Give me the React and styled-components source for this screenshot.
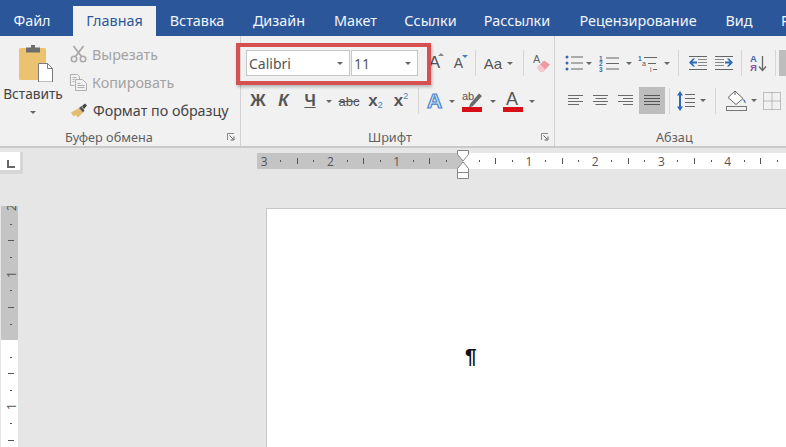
import React from 'react'
import styled, { createGlobalStyle } from 'styled-components'

const UI_FONT = `'Noto Sans', 'Open Sans', 'Liberation Sans', sans-serif`
const TICK = 16.55

const GlobalStyle = createGlobalStyle`
  html, body {
    margin: 0;
    width: 786px;
    height: 447px;
    overflow: hidden;
    background: #e6e6e6;
  }
  body {
    font-family: ${UI_FONT};
  }
`

const Page = styled.div`
  display: flex;
  flex-direction: column;
  width: 786px;
  height: 447px;
  overflow: hidden;
`

const TabBar = styled.div`
  display: flex;
  align-items: flex-end;
  flex: 0 0 36px;
  background: #2b579a;
  white-space: nowrap;
`

const Tab = styled.div`
  flex: 0 0 ${(p) => p.$w}px;
  height: 30px;
  line-height: 29px;
  margin-right: ${(p) => p.$gap || 0}px;
  padding-left: ${(p) => p.$pad || 0}px;
  text-align: ${(p) => (p.$pad ? 'left' : 'center')};
  font-size: 14.4px;
  color: ${(p) => (p.$active ? '#2b579a' : '#f2f5fa')};
  background: ${(p) => (p.$active ? '#f1f1f1' : 'transparent')};
`

const Ribbon = styled.div`
  display: flex;
  flex: 0 0 112px;
  box-sizing: border-box;
  background: #f1f1f1;
  border-bottom: 2px solid #c9c9c9;
`

const Group = styled.div`
  position: relative;
  display: flex;
  flex-direction: column;
  flex: 0 0 ${(p) => p.$w}px;
  box-sizing: border-box;
  border-right: ${(p) => (p.$last ? 'none' : '1px solid #d2d2d2')};
`

const GroupBody = styled.div`
  flex: 1;
  display: flex;
  flex-direction: column;
  padding-left: ${(p) => p.$left}px;
`

const GroupLabel = styled.div`
  display: flex;
  align-items: center;
  height: 22px;
  box-sizing: border-box;
  padding: 4px 5px 0 ${(p) => p.$left}px;
  font-size: 12.7px;
  color: #5f5f5f;
`

const Launcher = styled.svg`
  margin-left: auto;
`

const ClipBody = styled.div`
  flex: 1;
  display: flex;
  padding-top: 8px;
`

const PasteColumn = styled.div`
  flex: 0 0 66px;
  display: flex;
  flex-direction: column;
  align-items: center;
  font-size: 13.7px;
  color: #444;
  line-height: 18px;
`

const PasteGlyph = styled.svg`
  margin-left: 6px;
`

const PasteLabel = styled.span`
  margin-top: 3px;
`

const ClipList = styled.div`
  display: flex;
  flex-direction: column;
  gap: 8px;
  padding-left: 4px;
`

const ClipItem = styled.div`
  display: flex;
  align-items: center;
  gap: 5px;
  height: 20px;
  font-size: 14.3px;
  white-space: nowrap;
  color: ${(p) => (p.$disabled ? '#a3a3a3' : '#444')};
`

const ClipIcon = styled.span`
  flex: 0 0 17px;
  display: flex;
  justify-content: center;
`

const Row = styled.div`
  display: flex;
  align-items: center;
  height: ${(p) => p.$h}px;
  margin-top: ${(p) => p.$top || 0}px;
`

const Combo = styled.div`
  display: flex;
  align-items: center;
  justify-content: space-between;
  box-sizing: border-box;
  width: ${(p) => p.$w}px;
  height: 26px;
  padding: 0 6px 0 2px;
  background: #fff;
  border: 1px solid #c6c6c6;
  margin-right: ${(p) => p.$gap || 0}px;
  font-size: 14px;
  color: #555;
`

const Cell = styled.div`
  position: relative;
  flex: 0 0 ${(p) => p.$w}px;
  height: ${(p) => p.$h || 26}px;
  display: flex;
  align-items: center;
  justify-content: center;
  font-family: 'Liberation Sans', sans-serif;
  font-size: ${(p) => p.$size || 16}px;
  font-weight: ${(p) => (p.$bold ? 700 : 400)};
  font-style: ${(p) => (p.$italic ? 'italic' : 'normal')};
  color: ${(p) => p.$color || '#555'};
  background: ${(p) => (p.$on ? '#bdbdbd' : 'transparent')};
  text-decoration: ${(p) => p.$deco || 'none'};
`

const Caret = styled.i`
  display: block;
  width: 0;
  height: 0;
  flex: none;
  margin-top: ${(p) => p.$top || 0}px;
  border-left: 3px solid transparent;
  border-right: 3px solid transparent;
  border-top: 3px solid #666;
`

const GrowMark = styled.i`
  position: absolute;
  top: ${(p) => (p.$up ? 3 : 5)}px;
  right: ${(p) => (p.$up ? 2 : 3)}px;
  width: 0;
  height: 0;
  border-left: 3px solid transparent;
  border-right: 3px solid transparent;
  border-top: ${(p) => (p.$up ? 'none' : '3px solid #4a7ebb')};
  border-bottom: ${(p) => (p.$up ? '3px solid #888' : 'none')};
`

const Sep = styled.i`
  display: block;
  width: 1px;
  height: 26px;
  background: #d6d6d6;
`

const Index = styled.span`
  position: relative;
  top: ${(p) => (p.$up ? -5 : 4)}px;
  font-size: 9px;
  font-weight: 400;
  color: #4a7ebb;
`

const Highlight = styled.div`
  position: absolute;
  left: -5px;
  top: 7px;
  width: 195px;
  height: 42px;
  box-sizing: border-box;
  border: 4px solid #d5504f;
  box-shadow: 1px 2px 3px rgba(0, 0, 0, 0.25);
  pointer-events: none;
`

const Workspace = styled.div`
  flex: 1;
  display: flex;
  flex-direction: column;
  min-height: 0;
  background: #e6e6e6;
`

const RulerRow = styled.div`
  position: relative;
  display: flex;
  align-items: flex-start;
  flex: 0 0 58px;
`

const TabStop = styled.div`
  flex: 0 0 20px;
  height: 18px;
  margin-top: 4px;
  background: #fff;
  border-bottom: 4px solid #d6d6d6;
  border-right: 3px solid #d6d6d6;
  display: flex;
  align-items: flex-end;
`

const TabGlyph = styled.i`
  display: block;
  width: 6px;
  height: 6px;
  margin: 0 0 2px 7px;
  border-left: 2px solid #666;
  border-bottom: 2px solid #666;
`

const HRuler = styled.div`
  flex: 1;
  display: flex;
  height: 16px;
  margin: 5px 0 0 234px;
  overflow: hidden;
  background: linear-gradient(90deg, #c4c4c4 206px, #fff 206px);
`

const HTrack = styled.div`
  display: flex;
  margin-left: -1px;
`

const HTick = styled.div`
  flex: 0 0 ${TICK}px;
  display: flex;
  align-items: center;
  justify-content: center;
  font-family: 'Open Sans', sans-serif;
  font-size: 12px;
  color: #555;
`

const TickMark = styled.i`
  display: block;
  width: ${(p) => (p.$vertical ? (p.$long ? 6 : 2) : 1)}px;
  height: ${(p) => (p.$vertical ? 1 : p.$long ? 6 : 2)}px;
  background: #555;
`

const Marker = styled.svg`
  position: absolute;
  left: 457px;
  top: 1px;
`

const DocRow = styled.div`
  flex: 1;
  display: flex;
  min-height: 0;
  padding-left: 1px;
`

const VRuler = styled.div`
  flex: 0 0 17px;
  display: flex;
  flex-direction: column;
  overflow: hidden;
  background: linear-gradient(180deg, #c4c4c4 134px, #fff 134px);
`

const VTrack = styled.div`
  display: flex;
  flex-direction: column;
  margin-top: -7px;
`

const VTick = styled.div`
  flex: 0 0 ${TICK}px;
  display: flex;
  align-items: center;
  justify-content: center;
  padding-left: 3px;
  font-family: 'Open Sans', sans-serif;
  font-size: 12px;
  color: #555;
`

const VNumber = styled.span`
  display: block;
  transform: rotate(-90deg);
`

const Sheet = styled.div`
  flex: 1;
  margin: 2px 0 0 248px;
  background: #fff;
  border-left: 1px solid #c6c6c6;
  border-top: 1px solid #c6c6c6;
  padding: 134px 0 0 198px;
  font-family: 'Liberation Sans', sans-serif;
  font-size: 21px;
  line-height: 26px;
  color: #111;
`

const Pilcrow = styled.span`
  font-weight: 700;
`

const LauncherIcon = () => (
  <Launcher width="8" height="8" viewBox="0 0 8 8">
    <path d="M.5 7V.5H7" fill="none" stroke="#8a8a8a" />
    <path d="M2.500 2.500 6.500 6.500M7 3.500V7H3.500" fill="none" stroke="#666" />
  </Launcher>
)

const PasteIcon = () => (
  <PasteGlyph width="36" height="38" viewBox="0 0 36 38">
    <rect x="1" y="4" width="27" height="32" rx="1.5" fill="#ebc270" />
    <path d="M8 6V3.500h5V1h4v2.500h5V6v2.500H8z" fill="#6d6d6d" />
    <path d="M20.500 19.500h9l5 5v13.500h-14z" fill="#fff" stroke="#7a7a7a" />
    <path d="M29.500 19.500v5h5" fill="none" stroke="#7a7a7a" />
  </PasteGlyph>
)

const ScissorsIcon = () => (
  <svg width="17" height="18" viewBox="0 0 17 18">
    <circle cx="4" cy="14" r="2.700" fill="none" stroke="#aaa" strokeWidth="1.600" />
    <circle cx="13" cy="14" r="2.700" fill="none" stroke="#aaa" strokeWidth="1.600" />
    <path d="M5.500 11.500 13.500 1M11.500 11.500 3.500 1" stroke="#aaa" strokeWidth="1.800" fill="none" />
  </svg>
)

const CopyIcon = () => (
  <svg width="17" height="17" viewBox="0 0 17 17" fill="none" stroke="#b0b0b0">
    <path d="M.5.500h7l2 2v3M.5.500v11h4" />
    <path d="M5.500 5.500h7l4 4v7h-11zM7.500 9.500h3M7.500 11.500h7M7.500 13.500h7" />
    <path d="M2.500 3.500h4M2.500 5.500h2M2.500 7.500h2" />
  </svg>
)

const BrushIcon = () => (
  <svg width="18" height="15" viewBox="0 0 18 15">
    <path d="M1 9.500 9 5l4 4.500L8 14.500 5.500 12 3.500 13.500z" fill="#e3bd72" />
    <path d="M9 5l4 4.500 1.500-2L11.500 3z" fill="#555" />
    <path d="M12 3l3-2.500 2 2L14 6z" fill="#444" />
  </svg>
)

const EraserIcon = () => (
  <svg width="18" height="20" viewBox="0 0 18 20">
    <text x="0" y="10" fontFamily="Liberation Sans" fontSize="11" fill="#666">A</text>
    <path d="M4 14.500 11 7.500 17 11.500 10.500 18.500H7z" fill="#ee9aa2" />
    <path d="M4 14.500 7 18.500H10.500L12 16.500 7.500 11.500z" fill="#f6c9cd" />
  </svg>
)

const TextEffectIcon = () => (
  <svg width="20" height="22" viewBox="0 0 20 22">
    <text x="1" y="18" fontFamily="Liberation Sans" fontWeight="700" fontSize="21" fill="#dbe8f7" stroke="#4a86cf" strokeWidth="1.200">A</text>
  </svg>
)

const HighlightIcon = () => (
  <svg width="21" height="22" viewBox="0 0 21 22">
    <text x="0" y="10" fontFamily="Liberation Sans" fontSize="11" fill="#555">ab</text>
    <path d="M8 14 17 3.500l3 2.500-9 10-4 1.500z" fill="#6b6b6b" />
    <rect x="0" y="17" width="20" height="5" fill="#d80f16" />
  </svg>
)

const FontColorIcon = () => (
  <svg width="21" height="22" viewBox="0 0 21 22">
    <text x="3" y="15" fontFamily="Liberation Sans" fontSize="18" fill="#555">A</text>
    <rect x="0" y="17" width="20" height="5" fill="#d80f16" />
  </svg>
)

const Lines = ({ rows, w = 16, color = '#6b6b6b' }) => (
  <svg width={w} height="16" viewBox={`0 0 ${w} 16`}>
    {rows.map(([x1, x2, y]) => (
      <rect key={y} x={x1} y={y} width={x2 - x1} height="1" fill={color} />
    ))}
  </svg>
)

const rowsFor = (kind) => {
  const short = { left: [0, 11], center: [2.5, 13.5], right: [5, 15] }
  return [2, 5, 8, 11].map((y, i) => {
    if (kind === 'justify') return [0, 16, y]
    return i % 2 === 0 ? [0, 15, y] : [...short[kind], y]
  })
}

const BulletsIcon = () => (
  <svg width="18" height="16" viewBox="0 0 18 16">
    {[2, 8, 14].map((y) => (
      <g key={y}>
        <circle cx="2" cy={y} r="1.500" fill="#3e6ba8" />
        <rect x="6" y={y - 0.5} width="12" height="1" fill="#666" />
      </g>
    ))}
  </svg>
)

const NumbersIcon = () => (
  <svg width="20" height="17" viewBox="0 0 20 17">
    {[1, 2, 3].map((n) => (
      <g key={n}>
        <text x="0" y={n * 5.5} fontFamily="Liberation Sans" fontSize="6.500" fontWeight="700" fill="#3e6ba8">{n}</text>
        <rect x="7" y={n * 5.5 - 3} width="13" height="1" fill="#666" />
      </g>
    ))}
  </svg>
)

const MultilevelIcon = () => (
  <svg width="20" height="17" viewBox="0 0 20 17" fontFamily="Liberation Sans">
    <text x="0" y="6" fontSize="6.500" fontWeight="700" fill="#3e6ba8">1</text>
    <rect x="6" y="2" width="13" height="1" fill="#666" />
    <text x="4" y="11" fontSize="7" fill="#555">a</text>
    <rect x="10" y="8" width="8" height="1" fill="#666" />
    <text x="12" y="16.500" fontSize="6.500" fill="#555">i</text>
    <rect x="15" y="14" width="4" height="1" fill="#666" />
  </svg>
)

const IndentIcon = ({ flip }) => (
  <svg width="18" height="16" viewBox="0 0 18 16">
    <g transform={flip ? 'translate(18 0) scale(-1 1)' : undefined}>
      <rect x="0" y="1" width="18" height="1" fill="#666" />
      <rect x="0" y="14" width="18" height="1" fill="#666" />
      <rect x="9" y="4" width="9" height="1" fill="#888" />
      <rect x="9" y="7" width="9" height="1" fill="#888" />
      <rect x="9" y="10" width="9" height="1" fill="#888" />
      <path d="M0 7.500 4 3.500H6L3.500 6.500H8V8.500H3.500L6 11.500H4z" fill="#2f69b4" />
    </g>
  </svg>
)

const SortIcon = () => (
  <svg width="18" height="20" viewBox="0 0 18 20" fontFamily="Liberation Sans" fontWeight="700" fontSize="9.500">
    <text x="0" y="9" fill="#3e6ba8">A</text>
    <text x="0" y="18" fill="#8a4d9e">Я</text>
    <path d="M12.500 3v14M9 13.500l3.500 4 3.500-4" fill="none" stroke="#666" strokeWidth="1.300" />
  </svg>
)

const SpacingIcon = () => (
  <svg width="18" height="20" viewBox="0 0 18 20">
    <path d="M3 0 6 4.500H4V15.500H6L3 20 0 15.500H2V4.500H0z" fill="#2f69b4" />
    {[3, 7, 11, 15].map((y) => (
      <rect key={y} x="8" y={y} width="10" height="1" fill="#666" />
    ))}
  </svg>
)

const ShadingIcon = () => (
  <svg width="21" height="21" viewBox="0 0 21 21">
    <path d="M9 1 17 8.500 10 14.500 2 7.500z" fill="#fff" stroke="#666" />
    <path d="M9 1v4" stroke="#666" />
    <path d="M17 8.500c2 1.500 3 3 2.500 5-1-1-2-2-2.500-5z" fill="#3b73b9" />
    <rect x=".5" y="16.500" width="20" height="4" fill="none" stroke="#777" />
  </svg>
)

const BordersIcon = () => (
  <svg width="18" height="18" viewBox="0 0 18 18" fill="none" stroke="#888" strokeDasharray="1 1">
    <rect x=".5" y=".5" width="17" height="17" />
    <path d="M9 .5v17M.5 9h17" />
  </svg>
)

const ClipboardGroup = () => (
  <Group $w={241}>
    <ClipBody>
      <PasteColumn>
        <PasteIcon />
        <PasteLabel>Вставить</PasteLabel>
        <Caret $top={8} />
      </PasteColumn>
      <ClipList>
        <ClipItem $disabled>
          <ClipIcon><ScissorsIcon /></ClipIcon>
          Вырезать
        </ClipItem>
        <ClipItem $disabled>
          <ClipIcon><CopyIcon /></ClipIcon>
          Копировать
        </ClipItem>
        <ClipItem>
          <ClipIcon><BrushIcon /></ClipIcon>
          Формат по образцу
        </ClipItem>
      </ClipList>
    </ClipBody>
    <GroupLabel $left={65}>
      Буфер обмена
      <LauncherIcon />
    </GroupLabel>
  </Group>
)

const FontGroup = () => (
  <Group $w={314}>
    <GroupBody $left={5}>
      <Row $h={26} $top={14}>
        <Combo $w={104} $gap={1}>
          Calibri
          <Caret />
        </Combo>
        <Combo $w={67} $gap={5}>
          11
          <Caret />
        </Combo>
        <Cell $w={23} $size={17}>
          A
          <GrowMark $up />
        </Cell>
        <Cell $w={25} $size={14}>
          A
          <GrowMark />
        </Cell>
        <Cell $w={8}><Sep /></Cell>
        <Cell $w={28} $size={15}>Aa</Cell>
        <Cell $w={6}><Caret /></Cell>
        <Cell $w={20}><Sep /></Cell>
        <Cell $w={16}><EraserIcon /></Cell>
      </Row>
      <Row $h={26} $top={12}>
        <Cell $w={24} $bold $size={17}>Ж</Cell>
        <Cell $w={27} $bold $italic $size={17}>К</Cell>
        <Cell $w={26} $bold $size={16} $deco="underline">Ч</Cell>
        <Cell $w={12}><Caret /></Cell>
        <Cell $w={28} $size={13} $deco="line-through">abc</Cell>
        <Cell $w={25} $bold $size={17}>x<Index>2</Index></Cell>
        <Cell $w={26} $bold $size={17}>x<Index $up>2</Index></Cell>
        <Cell $w={8}><Sep /></Cell>
        <Cell $w={27}><TextEffectIcon /></Cell>
        <Cell $w={6}><Caret /></Cell>
        <Cell $w={34}><HighlightIcon /></Cell>
        <Cell $w={8}><Caret /></Cell>
        <Cell $w={32}><FontColorIcon /></Cell>
        <Cell $w={6}><Caret /></Cell>
      </Row>
    </GroupBody>
    <GroupLabel $left={127}>
      Шрифт
      <LauncherIcon />
    </GroupLabel>
    <Highlight />
  </Group>
)

const ParagraphGroup = () => (
  <Group $w={231} $last>
    <GroupBody $left={8}>
      <Row $h={26} $top={14}>
        <Cell $w={22}><BulletsIcon /></Cell>
        <Cell $w={8}><Caret /></Cell>
        <Cell $w={32}><NumbersIcon /></Cell>
        <Cell $w={8}><Caret /></Cell>
        <Cell $w={30}><MultilevelIcon /></Cell>
        <Cell $w={8}><Caret /></Cell>
        <Cell $w={14}><Sep /></Cell>
        <Cell $w={26}><IndentIcon /></Cell>
        <Cell $w={26}><IndentIcon flip /></Cell>
        <Cell $w={8}><Sep /></Cell>
        <Cell $w={27}><SortIcon /></Cell>
        <Cell $w={7}><Sep /></Cell>
        <Cell $w={7} $on />
      </Row>
      <Row $h={27} $top={11}>
        <Cell $w={25} $h={27}><Lines rows={rowsFor('left')} /></Cell>
        <Cell $w={25} $h={27}><Lines rows={rowsFor('center')} /></Cell>
        <Cell $w={26} $h={27}><Lines rows={rowsFor('right')} /></Cell>
        <Cell $w={26} $h={27} $on><Lines rows={rowsFor('justify')} color="#555" /></Cell>
        <Cell $w={8} $h={27}><Sep /></Cell>
        <Cell $w={26} $h={27}><SpacingIcon /></Cell>
        <Cell $w={8} $h={27}><Caret /></Cell>
        <Cell $w={17} $h={27}><Sep /></Cell>
        <Cell $w={24} $h={27}><ShadingIcon /></Cell>
        <Cell $w={11} $h={27}><Caret /></Cell>
        <Cell $w={26} $h={27}><BordersIcon /></Cell>
      </Row>
    </GroupBody>
    <GroupLabel $left={101}>Абзац</GroupLabel>
  </Group>
)

const tabs = [
  { name: 'Файл', w: 64, gap: 9 },
  { name: 'Главная', w: 83, active: true },
  { name: 'Вставка', w: 82 },
  { name: 'Дизайн', w: 82 },
  { name: 'Макет', w: 71 },
  { name: 'Ссылки', w: 79 },
  { name: 'Рассылки', w: 94 },
  { name: 'Рецензирование', w: 148 },
  { name: 'Вид', w: 54 },
  { name: 'Разработчик', w: 100, pad: 15 },
]

const hTicks = Array.from({ length: 33 }, (_, i) => i - 12)
const vTicks = Array.from({ length: 16 }, (_, i) => i - 8)

const tickContent = (k, vertical) => {
  if (k === 0) return null
  if (k % 4 === 0) {
    const n = Math.abs(k / 4)
    return vertical ? <VNumber>{n}</VNumber> : n
  }
  return <TickMark $vertical={vertical} $long={k % 2 === 0} />
}

const App = () => (
  <Page>
    <GlobalStyle />
    <TabBar>
      {tabs.map((t) => (
        <Tab key={t.name} $w={t.w} $gap={t.gap} $pad={t.pad} $active={t.active}>{t.name}</Tab>
      ))}
    </TabBar>
    <Ribbon>
      <ClipboardGroup />
      <FontGroup />
      <ParagraphGroup />
    </Ribbon>
    <Workspace>
      <RulerRow>
        <TabStop><TabGlyph /></TabStop>
        <HRuler>
          <HTrack>
            {hTicks.map((k) => (
              <HTick key={k}>{tickContent(k, false)}</HTick>
            ))}
          </HTrack>
        </HRuler>
        <Marker width="12" height="30" viewBox="0 0 12 30">
          <path d="M.5 1.500h11v4L6 12 .5 5.500zM6 13l5.500 6.500v4H.5v-4zM.5 23.500h11v6H.5z" fill="#fff" stroke="#858585" />
        </Marker>
      </RulerRow>
      <DocRow>
        <VRuler>
          <VTrack>
            {vTicks.map((k) => (
              <VTick key={k}>{tickContent(k, true)}</VTick>
            ))}
          </VTrack>
        </VRuler>
        <Sheet><Pilcrow>¶</Pilcrow></Sheet>
      </DocRow>
    </Workspace>
  </Page>
)

export default App
